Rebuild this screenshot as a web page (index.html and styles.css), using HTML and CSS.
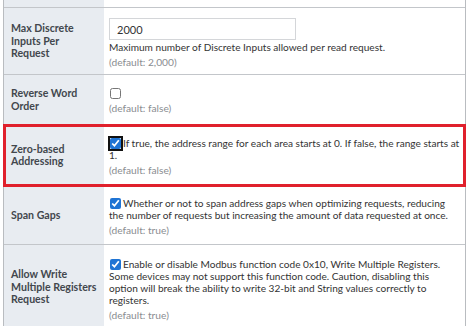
FILE: index.html
```html
<!DOCTYPE html>
<html lang="en">
<head>
  <meta charset="UTF-8" />
  <title>Modbus Device Settings</title>
  <link rel="stylesheet" href="styles.css">
</head>
<body>
  <div class="settings">
    <div class="row row-top">
      <div class="label"></div>
      <div class="value"></div>
    </div>

    <div class="row row-max">
      <div class="label">Max Discrete Inputs Per Request</div>
      <div class="value">
        <input type="text" class="num" value="2000" />
        <div class="desc">Maximum number of Discrete Inputs allowed per read request.</div>
        <div class="default">(default: 2,000)</div>
      </div>
    </div>

    <div class="row row-reverse">
      <div class="label">Reverse Word Order</div>
      <div class="value">
        <div class="desc"><input type="checkbox" class="check" /></div>
        <div class="default">(default: false)</div>
      </div>
    </div>

    <div class="row row-zero highlight">
      <div class="label">Zero-based Addressing</div>
      <div class="value">
        <div class="desc"><input type="checkbox" class="check focused" checked />If true, the address range for each area starts at 0. If false, the range starts at 1.</div>
        <div class="default">(default: false)</div>
      </div>
    </div>

    <div class="row row-span">
      <div class="label">Span Gaps</div>
      <div class="value">
        <div class="desc"><input type="checkbox" class="check" checked />Whether or not to span address gaps when optimizing requests, reducing<br>the number of requests but increasing the amount of data requested at once.</div>
        <div class="default">(default: true)</div>
      </div>
    </div>

    <div class="row row-write">
      <div class="label">Allow Write Multiple Registers Request</div>
      <div class="value">
        <div class="desc"><input type="checkbox" class="check" checked />Enable or disable Modbus function code 0x10, Write Multiple Registers.<br>Some devices may not support this function code. Caution, disabling this<br>option will break the ability to write 32-bit and String values correctly to<br>registers.</div>
        <div class="default">(default: true)</div>
      </div>
    </div>
  </div>
</body>
</html>
```

FILE: styles.css
```css
body {
  margin: 0;
  background: #fff;
  font-family: Lato, "Open Sans", sans-serif;
  color: #333;
}
.settings {
  margin-left: 3px;
  width: 461px;
  border-left: 1px solid #b9bcc0;
  border-right: 1px solid #b9bcc0;
}
.row {
  display: grid;
  grid-template-columns: 100px 1fr;
  border-bottom: 1px solid #c3c6ca;
}
.label {
  background: #e8ecf1;
  padding: 0 5px 0 7px;
  display: flex;
  align-items: center;
  font-size: 10.6px;
  line-height: 12.5px;
  font-weight: bold;
  color: #42474d;
}
.value {
  padding: 10px 1px 7px 5px;
  font-size: 10.1px;
  line-height: 12px;
}
.row-top {
  height: 7px;
}
.row-top .value {
  padding: 0;
}
.row-max .value {
  padding-top: 10px;
  padding-bottom: 6px;
}
.row-reverse .value {
  padding-top: 12px;
  padding-bottom: 10px;
}
.row-zero .value {
  padding-top: 12px;
  padding-bottom: 9px;
}
.row-span .value {
  padding-top: 11px;
  padding-bottom: 8px;
}
.row-write .value {
  padding-top: 13px;
  padding-bottom: 8px;
}
.num {
  display: block;
  width: 187px;
  height: 22px;
  box-sizing: border-box;
  border: 1px solid #d4d6d9;
  padding: 0 7px;
  margin-bottom: 1px;
  font-family: inherit;
  font-size: 11px;
  color: #333;
}
.desc {
  color: #333;
}
.default {
  margin-top: 3px;
  font-size: 10.2px;
  line-height: 12px;
  color: #8a8d91;
}
.check {
  width: 11px;
  height: 11px;
  margin: 0 2px 0 1px;
  vertical-align: -2px;
  accent-color: #1f74d4;
}
.focused {
  outline: 2px solid #111;
  outline-offset: 0;
  border-radius: 2px;
}
.highlight {
  outline: 3px solid #e0202c;
  outline-offset: -2px;
  position: relative;
}
```
